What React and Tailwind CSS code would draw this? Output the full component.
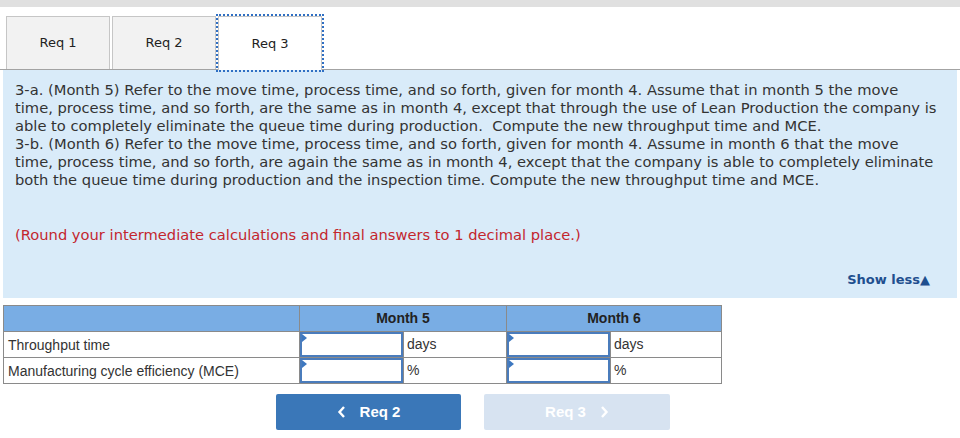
import React from "react";

function Tab({ label, active }) {
  return (
    <div
      className={
        "w-[104px] h-[53px] flex items-center justify-center text-[13px] text-[#222] border border-b-0 border-[#c6c6c6] " +
        (active
          ? "bg-white outline-2 outline-dotted outline-[#2f6fc3] relative z-10 h-[54px] -mb-[1px]"
          : "bg-[#f2f2f2]")
      }
      style={{ fontFamily: '"DejaVu Sans", Verdana, sans-serif' }}
    >
      {label}
    </div>
  );
}

function InputCell() {
  return (
    <td className="p-0 border border-[#8a8a8a] h-[25px] w-[104px]">
      <div className="relative h-[25px] w-full border-2 border-[#4a7cbc] bg-white">
        <div className="absolute left-0 top-0 w-0 h-0 border-t-[4px] border-b-[4px] border-l-[5px] border-t-transparent border-b-transparent border-l-[#3d78c0]" />
      </div>
    </td>
  );
}

export default function App() {
  const verdana = { fontFamily: '"DejaVu Sans", Verdana, sans-serif' };
  const arial = { fontFamily: '"Liberation Sans", Arial, sans-serif' };
  return (
    <div className="w-[960px] h-[438px] bg-white overflow-hidden">
      <div className="h-[7px] bg-[#e0e0e0]" />
      <div className="flex items-end pl-[6px] pt-[9px] gap-[2px] border-b border-[#a3a3a3]">
        <Tab label="Req 1" />
        <Tab label="Req 2" />
        <Tab label="Req 3" active />
      </div>
      <div
        className="mx-[3px] bg-[#d9ebf9] pt-[11px] pb-[9px] pl-[12px] pr-[6px] text-[#333] text-[14.7px] leading-[18px] whitespace-nowrap"
        style={verdana}
      >
        <p>
          3-a. (Month 5) Refer to the move time, process time, and so forth, given for month 4. Assume that in month 5 the move
          <br />
          time, process time, and so forth, are the same as in month 4, except that through the use of Lean Production the company is
          <br />
          able to completely eliminate the queue time during production.&nbsp; Compute the new throughput time and MCE.
        </p>
        <p>
          3-b. (Month 6) Refer to the move time, process time, and so forth, given for month 4. Assume in month 6 that the move
          <br />
          time, process time, and so forth, are again the same as in month 4, except that the company is able to completely eliminate
          <br />
          both the queue time during production and the inspection time. Compute the new throughput time and MCE.
        </p>
        <p className="mt-[37px] text-[#c3262e]">
          (Round your intermediate calculations and final answers to 1 decimal place.)
        </p>
        <div className="mt-[27px] flex justify-end pr-[21px]">
          <span className="font-bold text-[13px] text-[#1f4f8f]">
            Show less<span className="text-[13px]">▲</span>
          </span>
        </div>
      </div>
      <table
        className="mt-[7px] ml-[3px] border-collapse text-[14px] text-[#333]"
        style={arial}
      >
        <thead>
          <tr className="bg-[#79ade4] h-[26px]">
            <th className="border border-[#8a8a8a] w-[296px]" />
            <th colSpan={2} className="border border-[#8a8a8a] w-[207px] font-bold text-[#222]">Month 5</th>
            <th colSpan={2} className="border border-[#8a8a8a] w-[215px] font-bold text-[#222]">Month 6</th>
          </tr>
        </thead>
        <tbody>
          <tr>
            <td className="border border-[#8a8a8a] px-[4px] h-[25px] leading-[16px]">Throughput time</td>
            <InputCell />
            <td className="border border-[#8a8a8a] px-[3px] w-[103px]">days</td>
            <InputCell />
            <td className="border border-[#8a8a8a] px-[3px] w-[111px]">days</td>
          </tr>
          <tr>
            <td className="border border-[#8a8a8a] px-[4px] h-[25px] leading-[16px]">Manufacturing cycle efficiency (MCE)</td>
            <InputCell />
            <td className="border border-[#8a8a8a] px-[3px]">%</td>
            <InputCell />
            <td className="border border-[#8a8a8a] px-[3px]">%</td>
          </tr>
        </tbody>
      </table>
      <div className="mt-[10px] ml-[276px] flex gap-[23px]" style={arial}>
        <div className="w-[185px] h-[36px] rounded-[2px] bg-[#3a77b8] text-white font-bold text-[15px] flex items-center justify-center gap-[14px]">
          <svg width="9" height="14" viewBox="0 0 9 14"><path d="M7 2 L2.5 7 L7 12" stroke="white" strokeWidth="2.4" fill="none" /></svg>
          <span>Req 2</span>
        </div>
        <div className="w-[186px] h-[36px] rounded-[2px] bg-[#d7e3f1] text-white font-bold text-[15px] flex items-center justify-center gap-[14px]">
          <span>Req 3</span>
          <svg width="9" height="14" viewBox="0 0 9 14"><path d="M2 2 L6.5 7 L2 12" stroke="white" strokeWidth="2.4" fill="none" /></svg>
        </div>
      </div>
    </div>
  );
}
